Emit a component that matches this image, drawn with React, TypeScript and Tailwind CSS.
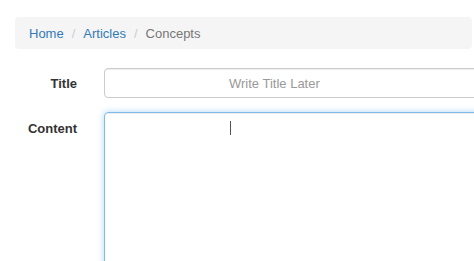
export default function App() {
  return (
    <div className="w-[474px] h-[261px] overflow-hidden bg-white font-['Liberation_Sans',Arial,sans-serif] text-[13px] text-[#333]">
      {/* Breadcrumb */}
      <div className="pt-[17px] pl-[15px]">
        <ol className="w-[457px] h-[32px] bg-[#f5f5f5] rounded-[4px] px-[14px] pt-px flex items-center">
          <li><a className="text-[#337ab7]">Home</a></li>
          <li className="px-[8px] text-[#ccc]">/</li>
          <li><a className="text-[#337ab7]">Articles</a></li>
          <li className="px-[8px] text-[#ccc]">/</li>
          <li className="text-[#777]">Concepts</li>
        </ol>
      </div>

      {/* Form */}
      <div className="pl-[15px] mt-[19px] flex flex-col gap-[14px]">
        <div className="flex items-center gap-[27px]">
          <label className="w-[62px] shrink-0 text-right font-bold pt-[2px]">Title</label>
          <input
            className="w-[420px] h-[30px] shrink-0 border border-[#ccc] rounded-[4px] pl-[124px] pt-px text-[13px] placeholder:text-[#999] outline-none shadow-[inset_0_1px_1px_rgba(0,0,0,0.075)]"
            placeholder="Write Title Later"
          />
        </div>
        <div className="flex items-start gap-[27px]">
          <label className="w-[62px] shrink-0 text-right font-bold pt-[7px]">Content</label>
          <div className="w-[420px] h-[200px] shrink-0 border border-[#7fbbea] rounded-[4px] pl-[125px] pt-[8px] shadow-[inset_0_1px_1px_rgba(0,0,0,0.075),0_0_6px_rgba(102,175,233,0.5)]">
            <span className="inline-block w-px h-[14px] bg-[#555]" />
          </div>
        </div>
      </div>
    </div>
  );
}
